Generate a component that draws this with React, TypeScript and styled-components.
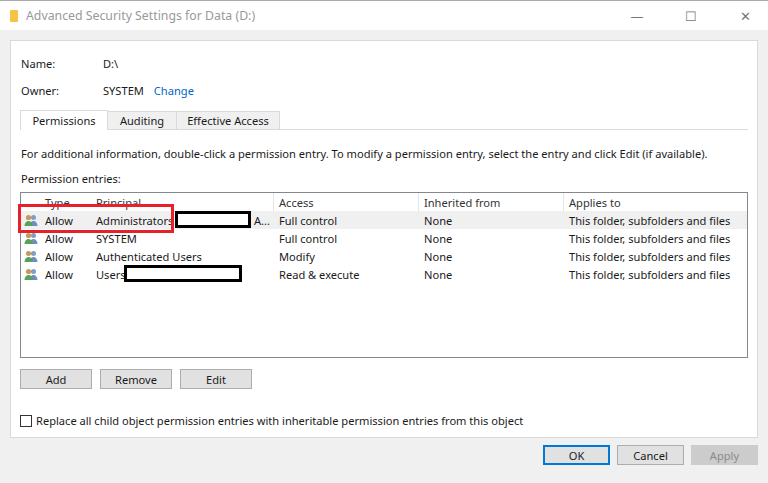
import React from "react";
import styled, { createGlobalStyle } from "styled-components";

const G = createGlobalStyle`
  html,body{margin:0;padding:0;background:#f0f0f0;}
  body{font-family:"Noto Sans","Liberation Sans",sans-serif;font-size:11.1px;color:#1a1a1a;}
`;
const Win = styled.div`width:768px;height:483px;display:flex;flex-direction:column;background:#f0f0f0;overflow:hidden;`;
const Title = styled.div`height:30px;background:#fff;border-top:1px solid #aaa;display:flex;align-items:center;padding-left:10px;gap:8px;color:#999;font-size:12.3px;box-sizing:border-box;`;
const TitleText = styled.span`flex:1;`;
const Ctrl = styled.span`width:46px;text-align:center;color:#777;font-size:13px;`;
const Panel = styled.div`margin:10px 10px 0 10px;height:398px;background:#fff;border:1px solid #d9d9d9;box-sizing:border-box;padding:9px 9px 0 9px;display:flex;flex-direction:column;`;
const Field = styled.div`display:flex;height:27px;align-items:center;padding-left:1px;`;
const Label = styled.span`width:82px;`;
const Link = styled.span`color:#0066cc;margin-left:10px;`;
const Tabs = styled.div`display:flex;margin-top:5px;height:20px;align-items:flex-end;border-bottom:1px solid #d9d9d9;`;
const Tab = styled.div<{ $active?: boolean; $w?: number }>`
  height:${p => p.$active ? 20 : 18}px;box-sizing:border-box;padding:0 ${p => p.$active ? 10 : 8}px;
  display:flex;align-items:center;border:1px solid #d9d9d9;border-bottom:none;margin-left:${p => p.$active ? 0 : -1}px;
  background:${p => p.$active ? "#fff" : "#f0f0f0"};margin-bottom:${p => p.$active ? -1 : 0}px;
  min-width:${p => p.$w ?? 0}px;justify-content:center;
`;
const Info = styled.div`margin-top:16px;padding-left:1px;`;
const Sub = styled.div`margin-top:10px;padding-left:1px;`;
const List = styled.div`margin-top:6px;height:166px;border:1px solid #828790;box-sizing:border-box;`;
const Row = styled.div<{ $sel?: boolean; $head?: boolean }>`
  display:grid;grid-template-columns:24px 51px 177px 145px 145px 1fr;height:18px;align-items:center;
  background:${p => p.$sel ? "#f0f0f0" : "transparent"};position:relative;color:${p => p.$head ? "#333" : "#1a1a1a"};
`;
const HCell = styled.div<{ $div?: boolean }>`height:18px;display:flex;align-items:center;padding-left:${p => p.$div ? 5 : 0}px;border-left:${p => p.$div ? "1px solid #e5e5e5" : "none"};`;
const Cell = styled.div<{ $pad?: number }>`padding-left:${p => p.$pad ?? 0}px;white-space:nowrap;overflow:hidden;position:relative;height:18px;display:flex;align-items:center;`;
const Redact = styled.div<{ $l: number; $w: number }>`position:absolute;top:0;left:${p => p.$l}px;width:${p => p.$w}px;height:17px;border:3px solid #000;box-sizing:border-box;background:#fff;`;
const Ellip = styled.span`position:absolute;left:158px;`;
const RedBox = styled.div`position:absolute;left:-3px;top:-7px;width:156px;height:29px;border:3px solid #e8202a;box-sizing:border-box;`;
const Btns = styled.div`display:flex;gap:8px;margin-top:11px;`;
const Btn = styled.div<{ $primary?: boolean; $dis?: boolean }>`
  width:${p => p.$primary !== undefined ? 67 : 72}px;height:20px;box-sizing:border-box;display:flex;align-items:center;justify-content:center;
  background:${p => p.$dis ? "#cccccc" : "#e1e1e1"};border:${p => p.$primary ? "2px solid #0078d7" : p.$dis ? "1px solid #cccccc" : "1px solid #adadad"};
  color:${p => p.$dis ? "#8b8b8b" : "#1a1a1a"};
`;
const Check = styled.div`display:flex;align-items:center;gap:4px;margin-top:24px;`;
const Box = styled.div`width:12px;height:12px;border:1px solid #333;box-sizing:border-box;background:#fff;`;
const Foot = styled.div`display:flex;justify-content:flex-end;gap:7px;padding:7px 10px 0 0;`;

const UserIcon = () => (
  <svg width="14" height="13" viewBox="0 0 14 13">
    <circle cx="9.5" cy="3.5" r="2.5" fill="#7e9fc4" />
    <path d="M5.5 12c0-3 1.8-5 4-5s4 2 4 5z" fill="#6f8fb8" />
    <circle cx="4.5" cy="3.5" r="2.6" fill="#c79a5a" />
    <path d="M0.5 12c0-3 1.8-5 4-5s4 2 4 5z" fill="#5aa15c" />
  </svg>
);

const rows = [
  ["Administrators", "Full control"],
  ["SYSTEM", "Full control"],
  ["Authenticated Users", "Modify"],
  ["Users", "Read & execute"],
];

export default function App() {
  return (
    <Win>
      <G />
      <Title>
        <svg width="8" height="12"><rect width="8" height="12" rx="1" fill="#f2c54a" /></svg>
        <TitleText>Advanced Security Settings for Data (D:)</TitleText>
        <Ctrl>—</Ctrl><Ctrl>☐</Ctrl><Ctrl>✕</Ctrl>
      </Title>
      <Panel>
        <Field><Label>Name:</Label>D:\</Field>
        <Field><Label>Owner:</Label>SYSTEM<Link>Change</Link></Field>
        <Tabs>
          <Tab $active $w={88}>Permissions</Tab>
          <Tab $w={70}>Auditing</Tab>
          <Tab $w={104}>Effective Access</Tab>
        </Tabs>
        <Info>For additional information, double-click a permission entry. To modify a permission entry, select the entry and click Edit (if available).</Info>
        <Sub>Permission entries:</Sub>
        <List>
          <Row $head>
            <HCell /><HCell>Type</HCell><HCell>Principal</HCell><HCell $div>Access</HCell><HCell $div>Inherited from</HCell><HCell $div>Applies to</HCell>
          </Row>
          {rows.map(([p, a], i) => (
            <Row key={p} $sel={i === 0}>
              <Cell $pad={3}><UserIcon /></Cell>
              <Cell>Allow</Cell>
              <Cell>
                {p}
                {i === 0 && <><Redact $l={79} $w={76} /><Ellip>A...</Ellip></>}
                {i === 3 && <Redact $l={28} $w={118} />}
              </Cell>
              <Cell $pad={6}>{a}</Cell>
              <Cell $pad={6}>None</Cell>
              <Cell $pad={6}>This folder, subfolders and files</Cell>
              {i === 0 && <RedBox />}
            </Row>
          ))}
        </List>
        <Btns><Btn>Add</Btn><Btn>Remove</Btn><Btn>Edit</Btn></Btns>
        <Check><Box />Replace all child object permission entries with inheritable permission entries from this object</Check>
      </Panel>
      <Foot>
        <Btn $primary>OK</Btn><Btn $primary={false}>Cancel</Btn><Btn $primary={false} $dis>Apply</Btn>
      </Foot>
    </Win>
  );
}
